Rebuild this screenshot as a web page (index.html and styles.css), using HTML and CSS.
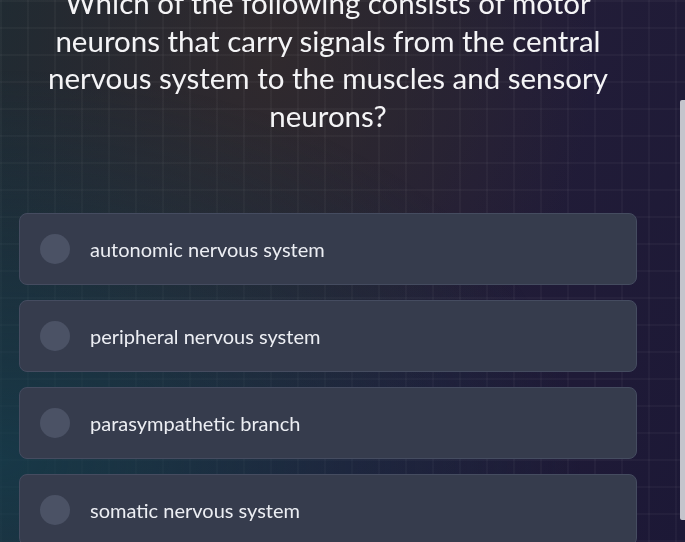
FILE: index.html
```html
<!DOCTYPE html>
<html lang="en">
<head>
    <meta charset="UTF-8">
    <meta name="viewport" content="width=device-width, initial-scale=1.0">
    <title>Quiz</title>
    <link rel="stylesheet" href="styles.css">
</head>
<body>

    <div class="quiz">
        <h1 class="question">Which of the following consists of motor neurons that carry signals from the central nervous system to the muscles and sensory neurons?</h1>

        <div class="options">
            <div class="option">
                <span class="radio"></span>
                <span class="label">autonomic nervous system</span>
            </div>
            <div class="option">
                <span class="radio"></span>
                <span class="label">peripheral nervous system</span>
            </div>
            <div class="option">
                <span class="radio"></span>
                <span class="label">parasympathetic branch</span>
            </div>
            <div class="option">
                <span class="radio"></span>
                <span class="label">somatic nervous system</span>
            </div>
        </div>
    </div>

    <div class="scrollbar"></div>

</body>
</html>
```

FILE: styles.css
```css
html, body {
    height: 100%;
}

body {
    margin: 0;
    padding: 0;
    overflow: hidden;
    font-family: Lato, "Open Sans", sans-serif;
    color: #eef0f4;
    background-color: #221f33;
    background-image:
        repeating-linear-gradient(90deg, rgba(255, 255, 255, 0.03) 0 2px, transparent 2px 27px),
        repeating-linear-gradient(0deg, rgba(255, 255, 255, 0.03) 0 2px, transparent 2px 27px),
        radial-gradient(ellipse at 40% 10%, rgba(50, 42, 44, 0.85), transparent 55%),
        linear-gradient(115deg, #1e2b33 0%, #232633 30%, #221d38 60%, #1c1836 100%);
}

/* teal glow at the lower left */
body::before {
    content: "";
    position: fixed;
    inset: 0;
    background: radial-gradient(ellipse at 0% 85%, rgba(20, 62, 78, 0.75), transparent 60%);
    pointer-events: none;
}

.quiz {
    position: relative;
    width: 618px;
    margin-left: 19px;
}

.question {
    width: 580px;
    margin: -16px auto 0;
    font-size: 29.5px;
    font-weight: 400;
    line-height: 37.5px;
    text-align: center;
    color: #f4f4f6;
}

.options {
    display: flex;
    flex-direction: column;
    gap: 15px;
    margin-top: 79px;
}

.option {
    display: flex;
    align-items: center;
    height: 70px;
    padding: 0 20px;
    background-color: #363c4d;
    border: 1px solid #454c60;
    border-radius: 8px;
}

.radio {
    width: 30px;
    height: 30px;
    border-radius: 50%;
    background-color: #4b5265;
    flex-shrink: 0;
}

.label {
    margin-left: 20px;
    font-size: 20px;
    color: #eceef3;
}

.scrollbar {
    position: fixed;
    right: 0;
    top: 100px;
    width: 5px;
    height: 420px;
    background-color: #c4c4cc;
    border-radius: 2px 0 0 2px;
}
```
